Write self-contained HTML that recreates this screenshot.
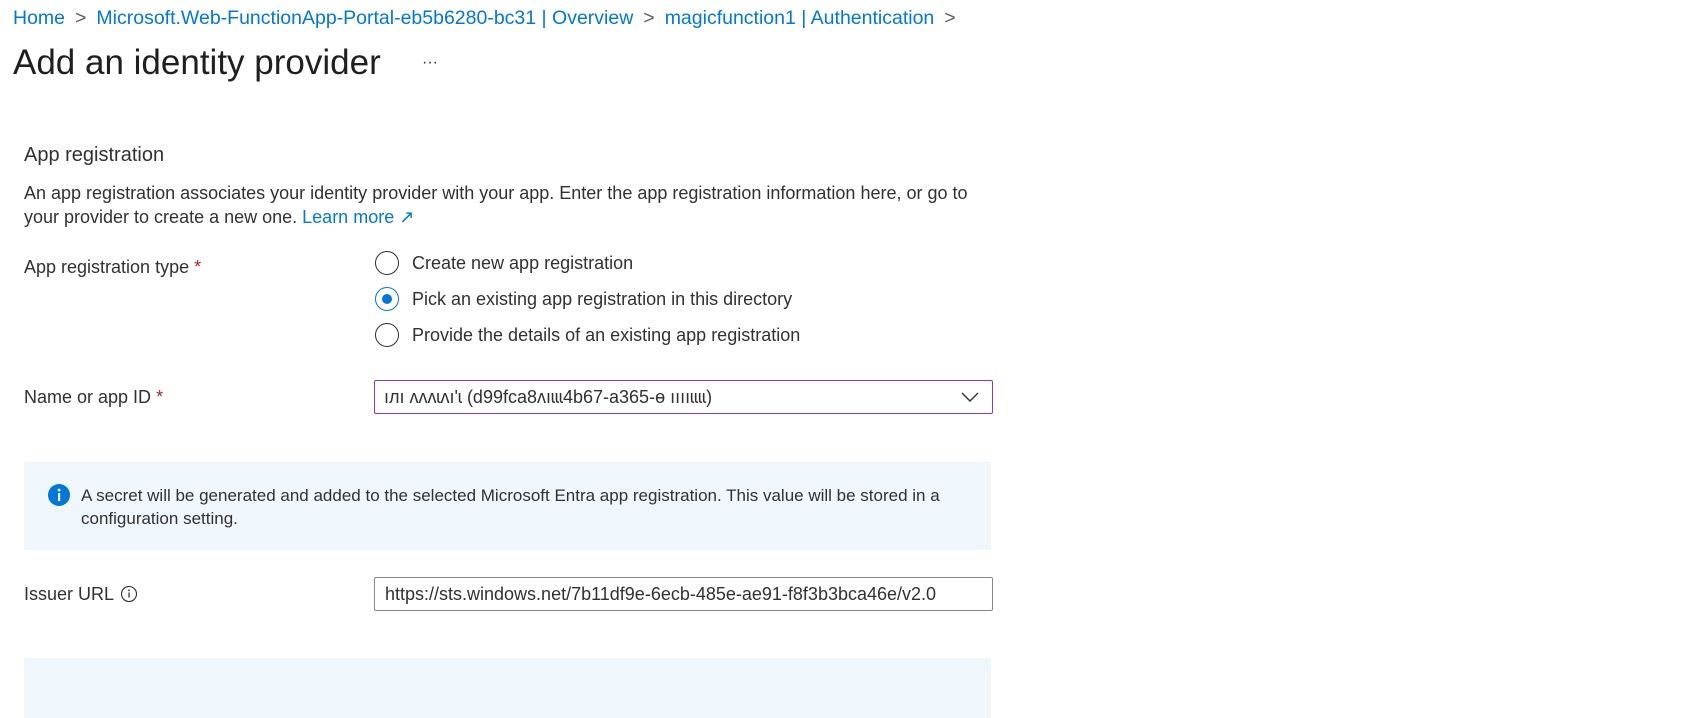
<!DOCTYPE html>
<html><head><meta charset="utf-8"><style>
body{margin:0;width:1681px;height:715px;overflow:hidden;background:#fff;font-family:"Liberation Sans",sans-serif;color:#323130;position:relative}
.a{position:absolute;white-space:nowrap}
.bc{top:7px;left:13px;font-size:19.5px;color:#0078d4}
.bc span.s{color:#605e5c;margin:0 10px}
.t{top:43px;left:13px;font-size:35px;color:#201f1e;font-weight:500}
.fs{font-size:18px}
.rad{width:24px;height:24px;border:1.5px solid #323130;border-radius:50%;box-sizing:border-box}
.rad.on{border-color:#0078d4}
.rad.on:after{content:"";position:absolute;left:5.5px;top:5.5px;width:10px;height:10px;border-radius:50%;background:#0078d4}
.box{border:1px solid #8a8886;border-radius:2px;box-sizing:border-box}
</style></head><body>
<div class="a bc">Home<span class="s">&gt;</span>Microsoft.Web-FunctionApp-Portal-eb5b6280-bc31 | Overview<span class="s">&gt;</span>magicfunction1 | Authentication<span class="s">&gt;</span></div>
<div class="a t">Add an identity provider</div>
<div class="a" style="top:54px;left:422px;font-size:16px;color:#323130">···</div>
<div class="a" style="top:144px;left:24px;font-size:20px;font-weight:500">App registration</div>
<div class="a fs" style="top:181px;left:24px;line-height:24px">An app registration associates your identity provider with your app. Enter the app registration information here, or go to<br>your provider to create a new one. <span style="color:#0078d4">Learn more ↗</span></div>
<div class="a fs" style="top:257px;left:24px">App registration type <span style="color:#a4262c">*</span></div>
<div class="a rad" style="top:251px;left:375px"></div>
<div class="a fs" style="top:253px;left:412px">Create new app registration</div>
<div class="a rad on" style="top:287px;left:375px"></div>
<div class="a fs" style="top:289px;left:412px">Pick an existing app registration in this directory</div>
<div class="a rad" style="top:323px;left:375px"></div>
<div class="a fs" style="top:325px;left:412px">Provide the details of an existing app registration</div>
<div class="a fs" style="top:387px;left:24px">Name or app ID <span style="color:#a4262c">*</span></div>
<div class="a box" style="top:380px;left:374px;width:619px;height:34px;border-color:#8a3bb5"></div>
<div class="a fs" style="top:387px;left:384px">ıлı ʌʌʌɩʌı'ɩ (d99fca8ʌıɩɩɩ4b67-a365-ɵ ııııɩɩɩɩ)</div>
<svg class="a" style="top:390px;left:960px" width="20" height="14"><path d="M2 3l8 8 8-8" fill="none" stroke="#323130" stroke-width="1.4"/></svg>
<div class="a" style="top:462px;left:24px;width:967px;height:88px;background:#eff6fc"></div>
<svg class="a" style="top:484px;left:48px" width="22" height="22"><circle cx="11" cy="11" r="11" fill="#0078d4"/><rect x="10" y="9" width="2.2" height="8" fill="#fff"/><circle cx="11.1" cy="6" r="1.4" fill="#fff"/></svg>
<div class="a" style="top:484px;left:81px;font-size:17px;line-height:23px">A secret will be generated and added to the selected Microsoft Entra app registration. This value will be stored in a<br>configuration setting.</div>
<div class="a fs" style="top:584px;left:24px">Issuer URL</div>
<svg class="a" style="top:585px;left:120px" width="18" height="18"><circle cx="9" cy="9" r="7.5" fill="none" stroke="#323130" stroke-width="1.1"/><rect x="8.4" y="7.5" width="1.3" height="5" fill="#323130"/><circle cx="9" cy="5.4" r=".9" fill="#323130"/></svg>
<div class="a box" style="top:577px;left:374px;width:619px;height:34px"></div>
<div class="a fs" style="top:584px;left:385px">https://sts.windows.net/7b11df9e-6ecb-485e-ae91-f8f3b3bca46e/v2.0</div>
<div class="a" style="top:658px;left:24px;width:967px;height:60px;background:#eff6fc"></div>
</body></html>
